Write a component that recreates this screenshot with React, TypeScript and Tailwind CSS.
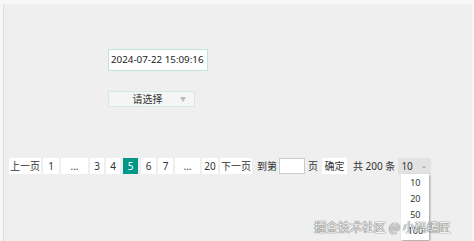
import React from 'react';

const font = { fontFamily: '"Noto Sans", "Noto Sans CJK SC", sans-serif' };

function PageBtn({ children, active, w }: { children: React.ReactNode; active?: boolean; w: string }) {
  return (
    <div
      className={`flex h-[16px] items-center justify-center text-[10px] ${w} ${
        active ? 'bg-[#009688] text-white' : 'bg-white text-[#333]'
      }`}
    >
      {children}
    </div>
  );
}

export default function App() {
  return (
    <div className="h-[241px] w-[474px] overflow-hidden bg-[#f7f7f7]" style={font}>
      <div className="relative ml-[3px] mt-[4px] h-[237px] w-[469px] border-l border-[#ddd] bg-[#efefef]">
        <div className="pl-[104px] pt-[45px]">
          <div className="flex h-[22px] w-[100px] items-center whitespace-nowrap border border-[#bfe3df] bg-white pl-[2px] text-[9.8px] text-[#222]">
            2024-07-22 15:09:16
          </div>
          <div className="mt-[20px] flex h-[16px] w-[87px] items-center border border-[#d3e9e6] bg-[#f5f5f5] text-[10px] text-[#333]">
            <span className="flex-1 pl-[6px] text-center">请选择</span>
            <span className="pr-[8px] text-[6px] text-[#bbb]">▼</span>
          </div>
        </div>

        <div className="ml-[5px] mt-[51px] flex items-center gap-[2px]">
          <PageBtn w="w-[32px]">上一页</PageBtn>
          <PageBtn w="w-[16px]">1</PageBtn>
          <PageBtn w="w-[27px]">...</PageBtn>
          <PageBtn w="w-[14px]">3</PageBtn>
          <PageBtn w="w-[14px]">4</PageBtn>
          <div className="ml-[1px] mr-[1px]">
            <PageBtn w="w-[15px]" active>5</PageBtn>
          </div>
          <PageBtn w="w-[15px]">6</PageBtn>
          <PageBtn w="w-[15px]">7</PageBtn>
          <PageBtn w="w-[25px]">...</PageBtn>
          <PageBtn w="w-[16px]">20</PageBtn>
          <PageBtn w="w-[32px]">下一页</PageBtn>
          <span className="ml-[3px] text-[10px] text-[#333]">到第</span>
          <div className="h-[16px] w-[26px] border border-[#ccc] bg-white" />
          <span className="ml-[1px] text-[10px] text-[#333]">页</span>
          <div className="ml-[2px]">
            <PageBtn w="w-[25px]">确定</PageBtn>
          </div>
          <span className="ml-[4px] text-[10px] text-[#333]">共 200 条</span>
          <div className="relative ml-[1px] flex h-[16px] w-[33px] items-center bg-[#e2e2e2] pl-[3px] text-[10px] text-[#333]">
            <span className="flex-1">10</span>
            <span className="pr-[4px] text-[7px] text-[#888]">⌄</span>
            <div className="absolute left-[3px] top-[16px] w-[28px] bg-white py-[1px] text-center text-[9px] shadow-[1px_1px_2px_rgba(0,0,0,0.35)]">
              <div className="h-[16px] leading-[16px]">10</div>
              <div className="h-[16px] leading-[16px]">20</div>
              <div className="h-[16px] leading-[16px]">50</div>
              <div className="h-[16px] leading-[16px]">100</div>
            </div>
          </div>
        </div>

        <div
          className="absolute left-[310px] top-[214px] whitespace-nowrap text-[12px] text-[#f4f4f4]"
          style={{ fontFamily: '"Noto Sans CJK SC", sans-serif', textShadow: '0 0 1px #444, 0 0 1px #666' }}
        >
          掘金技术社区 @ 小码编匠
        </div>
      </div>
    </div>
  );
}
